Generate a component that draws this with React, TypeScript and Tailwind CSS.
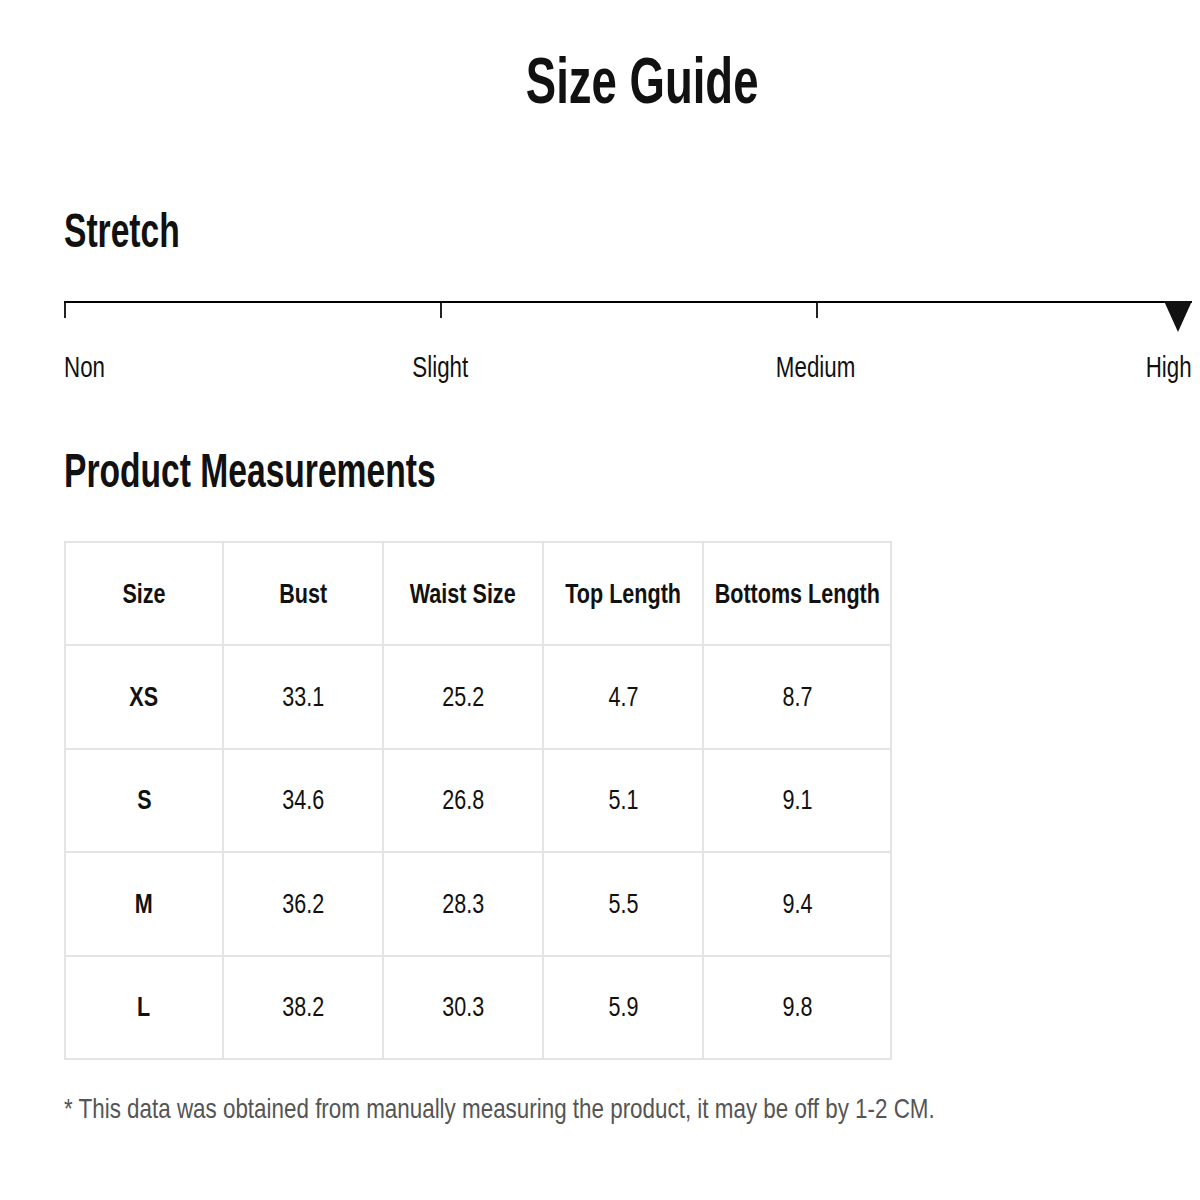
const headers = ['Size', 'Bust', 'Waist Size', 'Top Length', 'Bottoms Length'];

const rows = [
    ['XS', '33.1', '25.2', '4.7', '8.7'],
    ['S', '34.6', '26.8', '5.1', '9.1'],
    ['M', '36.2', '28.3', '5.5', '9.4'],
    ['L', '38.2', '30.3', '5.9', '9.8'],
];

function Narrow({ children, className = '' }: { children: React.ReactNode; className?: string }) {
    return <span className={`inline-block whitespace-nowrap ${className}`}>{children}</span>;
}

function Cell({ children, bold }: { children: React.ReactNode; bold?: boolean }) {
    return (
        <div className="h-[103.4px] flex items-center justify-center border-r-2 border-b-2 border-[#e4e4e4]">
            <Narrow className={`origin-center scale-x-[0.77] text-[28px] leading-none ${bold ? 'font-bold' : ''}`}>
                {children}
            </Narrow>
        </div>
    );
}

export default function App() {
    return (
        <div
            className="w-[1200px] h-[1200px] bg-white text-[#111] overflow-hidden"
            style={{ fontFamily: '"Liberation Sans", Arial, sans-serif' }}
        >
            {/* Title */}
            <div className="pt-[48px] pl-[85px] text-center">
                <Narrow className="origin-center scale-x-[0.7] text-[65px] leading-none font-bold">Size Guide</Narrow>
            </div>

            <div className="pl-[64px]">
                {/* Stretch */}
                <div className="mt-[94px] h-[48px]">
                    <Narrow className="origin-left scale-x-[0.7] text-[48px] leading-none font-bold">Stretch</Narrow>
                </div>

                <div className="mt-[46px] w-[1128px] border-t-2 border-black grid grid-cols-3 h-[34px]">
                    <div className="flex items-start">
                        <div className="w-[2px] h-[15px] bg-[#222]" />
                    </div>
                    <div className="flex items-start">
                        <div className="w-[2px] h-[15px] bg-[#222]" />
                    </div>
                    <div className="flex items-start justify-between">
                        <div className="w-[2px] h-[15px] bg-[#222]" />
                        <svg width="28" height="31" viewBox="0 0 28 31" className="-mt-[2px]">
                            <polygon points="0,0 28,0 14,31" fill="#111" />
                        </svg>
                    </div>
                </div>

                <div className="mt-[18px] w-[1128px] flex text-[29px] leading-none">
                    <div className="w-[316px]">
                        <Narrow className="origin-left scale-x-[0.77]">Non</Narrow>
                    </div>
                    <div className="w-[120px] text-center">
                        <Narrow className="origin-center scale-x-[0.77]">Slight</Narrow>
                    </div>
                    <div className="w-[256px]" />
                    <div className="w-[120px] text-center">
                        <Narrow className="origin-center scale-x-[0.77]">Medium</Narrow>
                    </div>
                    <div className="flex-1 text-right">
                        <Narrow className="origin-right scale-x-[0.77]">High</Narrow>
                    </div>
                </div>

                {/* Product Measurements */}
                <div className="mt-[65px] h-[48px]">
                    <Narrow className="origin-left scale-x-[0.7] text-[48px] leading-none font-bold">
                        Product Measurements
                    </Narrow>
                </div>

                <div className="mt-[46px] w-[828px] grid grid-cols-[158px_160px_160px_160px_188px] border-l-2 border-t-2 border-[#e4e4e4]">
                    {headers.map((h) => (
                        <Cell key={h} bold>
                            {h}
                        </Cell>
                    ))}
                    {rows.map((r) =>
                        r.map((v, i) => (
                            <Cell key={r[0] + i} bold={i === 0}>
                                {v}
                            </Cell>
                        ))
                    )}
                </div>

                <div className="mt-[35px] text-[28px] leading-none text-[#555]">
                    <Narrow className="origin-left scale-x-[0.8]">
                        * This data was obtained from manually measuring the product, it may be off by 1-2 CM.
                    </Narrow>
                </div>
            </div>
        </div>
    );
}
